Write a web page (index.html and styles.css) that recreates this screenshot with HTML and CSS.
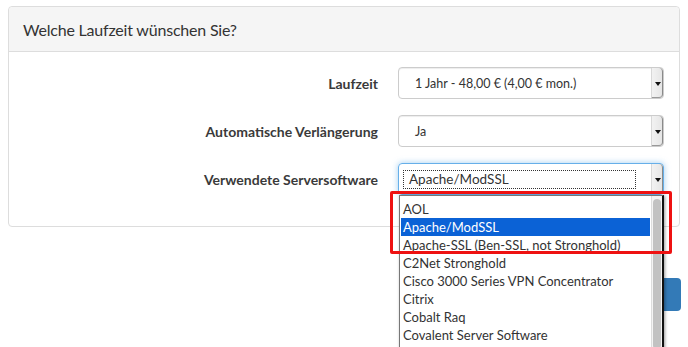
FILE: index.html
```html
<!DOCTYPE html>
<html lang="de">
<head>
<meta charset="utf-8">
<link rel="stylesheet" href="styles.css">
</head>
<body>
<div class="panel">
  <div class="panel-heading">Welche Laufzeit wünschen Sie?</div>
  <div class="panel-body">
    <div class="row">
      <div class="label">Laufzeit</div>
      <div class="select"><span class="value">1 Jahr - 48,00 € (4,00 € mon.)</span><span class="arrow"></span></div>
    </div>
    <div class="row">
      <div class="label">Automatische Verlängerung</div>
      <div class="select"><span class="value">Ja</span><span class="arrow"></span></div>
    </div>
    <div class="row">
      <div class="label">Verwendete Serversoftware</div>
      <div class="select-wrap">
        <div class="select focused"><span class="value focus-ring">Apache/ModSSL</span><span class="arrow"></span></div>
        <div class="btn-behind"></div>
        <div class="listbox">
          <div class="options">
            <div class="opt">AOL</div>
            <div class="opt sel">Apache/ModSSL</div>
            <div class="opt">Apache-SSL (Ben-SSL, not Stronghold)</div>
            <div class="opt">C2Net Stronghold</div>
            <div class="opt">Cisco 3000 Series VPN Concentrator</div>
            <div class="opt">Citrix</div>
            <div class="opt">Cobalt Raq</div>
            <div class="opt">Covalent Server Software</div>
          </div>
          <div class="scrollbar"><div class="thumb"></div></div>
        </div>
        <div class="highlight-box"></div>
      </div>
    </div>
  </div>
</div>
</body>
</html>
```

FILE: styles.css
```css
html, body {
  margin: 0;
  padding: 0;
  background: #fff;
  overflow: hidden;
}
body {
  width: 688px;
  height: 347px;
  font-family: "Lato", "Open Sans", sans-serif;
  color: #333;
}
.panel {
  margin: 6px 8px 0 8px;
  width: 672px;
  box-sizing: border-box;
  border: 1px solid #ddd;
  border-radius: 4px;
}
.panel-heading {
  height: 45px;
  box-sizing: border-box;
  background: #f5f5f5;
  border-bottom: 1px solid #ddd;
  border-radius: 4px 4px 0 0;
  padding: 0 0 0 14px;
  display: flex;
  align-items: center;
  font-size: 16px;
  letter-spacing: -0.2px;
}
.panel-body {
  padding: 15px 15px 31px 0;
  display: flex;
  flex-direction: column;
  gap: 16px;
}
.row {
  display: grid;
  grid-template-columns: 1fr 266px;
  column-gap: 20px;
  align-items: center;
  height: 32px;
}
.label {
  text-align: right;
  font-weight: 700;
  font-size: 14px;
  color: #3a3a3a;
}
.select-wrap {
  position: relative;
  height: 32px;
}
.select {
  height: 32px;
  box-sizing: border-box;
  border: 1px solid #ccc;
  border-radius: 4px;
  box-shadow: inset 0 1px 1px rgba(0,0,0,0.075);
  display: flex;
  align-items: center;
  padding-left: 16px;
  font-size: 12.5px;
  position: relative;
}
.select.focused {
  border-color: #66afe9;
  box-shadow: 0 0 6px rgba(102,175,233,0.6);
  padding-left: 4px;
}
.value {
  flex: 1;
}
.focus-ring {
  flex: 0 0 auto;
  width: 233px;
  height: 19px;
  box-sizing: border-box;
  border: 1px dotted #333;
  padding-left: 5px;
  display: flex;
  align-items: center;
  font-size: 13.5px;
}
.arrow {
  position: absolute;
  right: 0;
  top: 0;
  bottom: 0;
  width: 12px;
  background: linear-gradient(to right, #f2f2f2, #e6e6e6);
  border-left: 1px solid #d8d8d8;
  border-right: 1px solid #8a8a8a;
  border-bottom: 1px solid #999;
  border-radius: 0 4px 4px 0;
  box-sizing: border-box;
}
.arrow::after {
  content: "";
  position: absolute;
  left: 3px;
  top: 50%;
  margin-top: -1px;
  border-left: 3px solid transparent;
  border-right: 3px solid transparent;
  border-top: 4px solid #111;
}
.btn-behind {
  position: absolute;
  left: 250px;
  top: 115px;
  width: 33px;
  height: 33px;
  background: #337ab7;
  border-radius: 4px;
}
.listbox {
  position: absolute;
  left: 1px;
  top: 32px;
  width: 265px;
  height: 160px;
  background: #fff;
  border: 1px solid #777;
  border-right: 2px solid #111;
  box-sizing: border-box;
  display: flex;
  box-shadow: 1px 1px 3px rgba(0,0,0,0.4);
}
.options {
  flex: 1;
  padding: 4px 1px 0 1px;
  overflow: hidden;
}
.opt {
  height: 18px;
  line-height: 18px;
  font-size: 13px;
  padding-left: 2px;
  white-space: nowrap;
  color: #333;
}
.opt.sel {
  background: #0b62d6;
  color: #fff;
}
.scrollbar {
  width: 11px;
  background: #f4f4f4;
  border-left: 1px solid #ddd;
  padding: 3px 1px;
  box-sizing: border-box;
}
.thumb {
  height: 150px;
  background: #c2c2c2;
  border-radius: 4px;
}
.highlight-box {
  position: absolute;
  left: -8px;
  top: 28px;
  width: 282px;
  height: 63px;
  box-sizing: border-box;
  border: 3px solid #ee1111;
  border-radius: 2px;
}
```
